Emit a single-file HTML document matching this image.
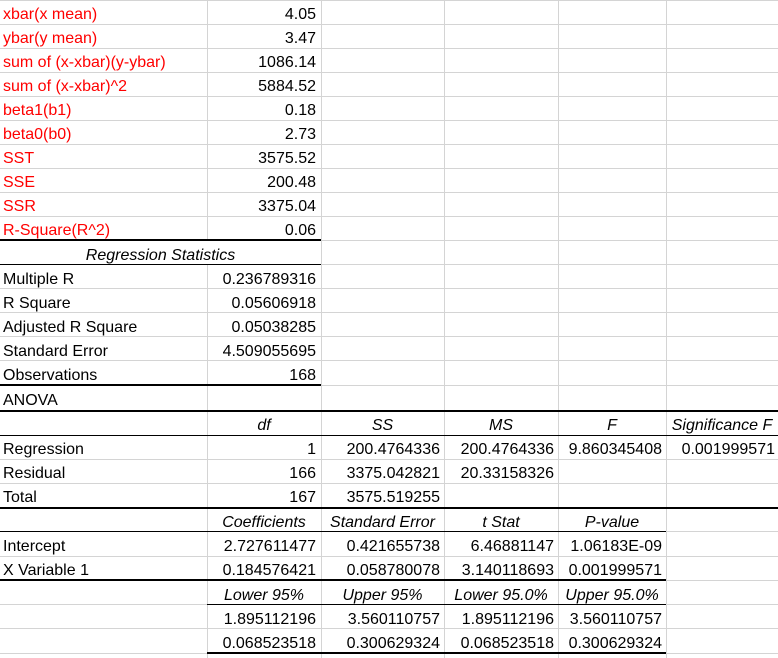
<!DOCTYPE html>
<html><head><meta charset="utf-8"><style>
html,body{margin:0;padding:0;background:#fff;width:778px;height:658px;overflow:hidden;position:relative}
body{font-family:"Liberation Sans",Arial,sans-serif;font-size:16px;color:#000}
.v{position:absolute;top:0;height:658px;width:1px;background:#d4d4d4}
.h{position:absolute;height:1px;background:#d4d4d4}
.k{position:absolute;height:1px;background:#000}
.t{position:absolute;height:2px;background:#000}
.c{position:absolute;white-space:nowrap;line-height:23px;height:23px;margin-top:2px}
.r{text-align:right}
.m{text-align:center}
.i{font-style:italic}
.red{color:#f00}
</style></head><body>
<div class="v" style="left:207px"></div>
<div class="v" style="left:321px"></div>
<div class="v" style="left:444px"></div>
<div class="v" style="left:558px"></div>
<div class="v" style="left:666px"></div>
<div style="position:absolute;left:207px;top:241px;width:1px;height:23px;background:#fff"></div>
<div class="h" style="top:0;left:0;width:778px"></div>
<div class="h" style="top:24px;left:0;width:778px"></div>
<div class="h" style="top:48px;left:0;width:778px"></div>
<div class="h" style="top:72px;left:0;width:778px"></div>
<div class="h" style="top:96px;left:0;width:778px"></div>
<div class="h" style="top:120px;left:0;width:778px"></div>
<div class="h" style="top:144px;left:0;width:778px"></div>
<div class="h" style="top:168px;left:0;width:778px"></div>
<div class="h" style="top:192px;left:0;width:778px"></div>
<div class="h" style="top:216px;left:0;width:778px"></div>
<div class="h" style="top:240px;left:0;width:778px"></div>
<div class="h" style="top:264px;left:0;width:778px"></div>
<div class="h" style="top:288px;left:0;width:778px"></div>
<div class="h" style="top:312px;left:0;width:778px"></div>
<div class="h" style="top:336px;left:0;width:778px"></div>
<div class="h" style="top:360px;left:0;width:778px"></div>
<div class="h" style="top:385px;left:0;width:778px"></div>
<div class="h" style="top:459px;left:0;width:778px"></div>
<div class="h" style="top:483px;left:0;width:778px"></div>
<div class="h" style="top:531px;left:0;width:778px"></div>
<div class="h" style="top:556px;left:0;width:778px"></div>
<div class="h" style="top:580px;left:0;width:778px"></div>
<div class="h" style="top:604px;left:0;width:778px"></div>
<div class="h" style="top:628px;left:0;width:778px"></div>
<div class="h" style="top:653px;left:0;width:778px"></div>
<div class="t" style="top:239px;left:0;width:321px"></div>
<div class="k" style="top:264px;left:0;width:321px"></div>
<div class="t" style="top:384px;left:0;width:321px"></div>
<div class="t" style="top:410px;left:0;width:778px"></div>
<div class="k" style="top:435px;left:0;width:778px"></div>
<div class="t" style="top:507px;left:0;width:778px"></div>
<div class="k" style="top:531px;left:0;width:666px"></div>
<div class="t" style="top:579px;left:0;width:666px"></div>
<div class="k" style="top:604px;left:207px;width:459px"></div>
<div class="t" style="top:652px;left:207px;width:459px"></div>

<div class="c red" style="left:3px;top:1px">xbar(x mean)</div><div class="c r" style="left:207px;width:109px;top:1px">4.05</div>
<div class="c red" style="left:3px;top:25px">ybar(y mean)</div><div class="c r" style="left:207px;width:109px;top:25px">3.47</div>
<div class="c red" style="left:3px;top:49px">sum of (x-xbar)(y-ybar)</div><div class="c r" style="left:207px;width:109px;top:49px">1086.14</div>
<div class="c red" style="left:3px;top:73px">sum of (x-xbar)^2</div><div class="c r" style="left:207px;width:109px;top:73px">5884.52</div>
<div class="c red" style="left:3px;top:97px">beta1(b1)</div><div class="c r" style="left:207px;width:109px;top:97px">0.18</div>
<div class="c red" style="left:3px;top:121px">beta0(b0)</div><div class="c r" style="left:207px;width:109px;top:121px">2.73</div>
<div class="c red" style="left:3px;top:145px">SST</div><div class="c r" style="left:207px;width:109px;top:145px">3575.52</div>
<div class="c red" style="left:3px;top:169px">SSE</div><div class="c r" style="left:207px;width:109px;top:169px">200.48</div>
<div class="c red" style="left:3px;top:193px">SSR</div><div class="c r" style="left:207px;width:109px;top:193px">3375.04</div>
<div class="c red" style="left:3px;top:217px">R-Square(R^2)</div><div class="c r" style="left:207px;width:109px;top:217px">0.06</div>

<div class="c m i" style="left:0;width:321px;top:242px">Regression Statistics</div>
<div class="c" style="left:3px;top:266px">Multiple R</div><div class="c r" style="left:207px;width:109px;top:266px">0.236789316</div>
<div class="c" style="left:3px;top:290px">R Square</div><div class="c r" style="left:207px;width:109px;top:290px">0.05606918</div>
<div class="c" style="left:3px;top:314px">Adjusted R Square</div><div class="c r" style="left:207px;width:109px;top:314px">0.05038285</div>
<div class="c" style="left:3px;top:338px">Standard Error</div><div class="c r" style="left:207px;width:109px;top:338px">4.509055695</div>
<div class="c" style="left:3px;top:362px">Observations</div><div class="c r" style="left:207px;width:109px;top:362px">168</div>

<div class="c" style="left:3px;top:387px">ANOVA</div>
<div class="c m i" style="left:207px;width:114px;top:412px">df</div>
<div class="c m i" style="left:321px;width:123px;top:412px">SS</div>
<div class="c m i" style="left:444px;width:114px;top:412px">MS</div>
<div class="c m i" style="left:558px;width:108px;top:412px">F</div>
<div class="c m i" style="left:666px;width:112px;top:412px">Significance F</div>

<div class="c" style="left:3px;top:436px">Regression</div>
<div class="c r" style="left:207px;width:109px;top:436px">1</div>
<div class="c r" style="left:321px;width:119px;top:436px">200.4764336</div>
<div class="c r" style="left:444px;width:110px;top:436px">200.4764336</div>
<div class="c r" style="left:558px;width:104px;top:436px">9.860345408</div>
<div class="c r" style="left:666px;width:109px;top:436px">0.001999571</div>

<div class="c" style="left:3px;top:460px">Residual</div>
<div class="c r" style="left:207px;width:109px;top:460px">166</div>
<div class="c r" style="left:321px;width:119px;top:460px">3375.042821</div>
<div class="c r" style="left:444px;width:110px;top:460px">20.33158326</div>

<div class="c" style="left:3px;top:484px">Total</div>
<div class="c r" style="left:207px;width:109px;top:484px">167</div>
<div class="c r" style="left:321px;width:119px;top:484px">3575.519255</div>

<div class="c m i" style="left:207px;width:114px;top:509px">Coefficients</div>
<div class="c m i" style="left:321px;width:123px;top:509px">Standard Error</div>
<div class="c m i" style="left:444px;width:114px;top:509px">t Stat</div>
<div class="c m i" style="left:558px;width:108px;top:509px">P-value</div>

<div class="c" style="left:3px;top:533px">Intercept</div>
<div class="c r" style="left:207px;width:109px;top:533px">2.727611477</div>
<div class="c r" style="left:321px;width:119px;top:533px">0.421655738</div>
<div class="c r" style="left:444px;width:110px;top:533px">6.46881147</div>
<div class="c r" style="left:558px;width:104px;top:533px">1.06183E-09</div>

<div class="c" style="left:3px;top:557px">X Variable 1</div>
<div class="c r" style="left:207px;width:109px;top:557px">0.184576421</div>
<div class="c r" style="left:321px;width:119px;top:557px">0.058780078</div>
<div class="c r" style="left:444px;width:110px;top:557px">3.140118693</div>
<div class="c r" style="left:558px;width:104px;top:557px">0.001999571</div>

<div class="c m i" style="left:207px;width:114px;top:582px">Lower 95%</div>
<div class="c m i" style="left:321px;width:123px;top:582px">Upper 95%</div>
<div class="c m i" style="left:444px;width:114px;top:582px">Lower 95.0%</div>
<div class="c m i" style="left:558px;width:108px;top:582px">Upper 95.0%</div>

<div class="c r" style="left:207px;width:109px;top:606px">1.895112196</div>
<div class="c r" style="left:321px;width:119px;top:606px">3.560110757</div>
<div class="c r" style="left:444px;width:110px;top:606px">1.895112196</div>
<div class="c r" style="left:558px;width:104px;top:606px">3.560110757</div>

<div class="c r" style="left:207px;width:109px;top:630px">0.068523518</div>
<div class="c r" style="left:321px;width:119px;top:630px">0.300629324</div>
<div class="c r" style="left:444px;width:110px;top:630px">0.068523518</div>
<div class="c r" style="left:558px;width:104px;top:630px">0.300629324</div>
</body></html>
